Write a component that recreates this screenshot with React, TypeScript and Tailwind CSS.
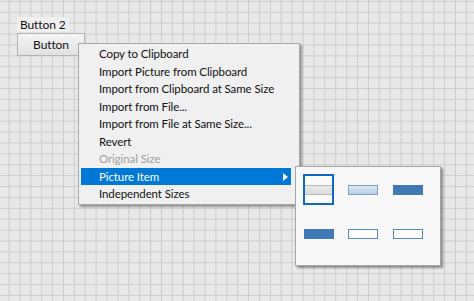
const items: { label: string; disabled?: boolean; active?: boolean; sub?: boolean }[] = [
  { label: 'Copy to Clipboard' },
  { label: 'Import Picture from Clipboard' },
  { label: 'Import from Clipboard at Same Size' },
  { label: 'Import from File...' },
  { label: 'Import from File at Same Size...' },
  { label: 'Revert' },
  { label: 'Original Size', disabled: true },
  { label: 'Picture Item', active: true, sub: true },
  { label: 'Independent Sizes' }
]

function Swatch({ kind }: { kind: string }) {
  if (kind === 'light') {
    return <div className="w-[30px] h-[10px] border border-[#7f9fc0] bg-[linear-gradient(to_bottom,#dbe8f5,#b9d0e8)]" />
  }
  if (kind === 'solid') {
    return <div className="w-[30px] h-[10px] bg-[#3f7ab4]" />
  }
  return <div className="w-[30px] h-[10px] border border-[#5d88b5] bg-white" />
}

export default function App() {
  return (
    <div className="relative w-[474px] h-[301px] overflow-hidden bg-[#e8e8e8] bg-[linear-gradient(to_right,#cdcdcd_1px,transparent_1px),linear-gradient(to_bottom,#cdcdcd_1px,transparent_1px)] bg-[size:10.9px_10.9px] bg-[position:8.5px_0.9px] font-['Lato',sans-serif] text-[11.5px] tracking-[-0.1px] text-[#111] whitespace-nowrap">
      {/* front panel controls */}
      <div className="absolute left-[17px] top-[17px] h-[15px] px-[3px] bg-[#efefef] leading-[15px] text-[12px]">Button 2</div>
      <div className="absolute left-[17px] top-[33px] w-[68px] h-[23px] border border-[#b4b4b4] bg-[linear-gradient(to_bottom,#f4f4f4,#e2e2e2)] flex items-center justify-center text-[12px]">
        Button
      </div>

      {/* context menu */}
      <div className="absolute left-[78px] top-[43px] w-[222px] border border-[#a7a7a7] bg-[#f0f0f0] py-[1px] px-[2px] shadow-[2px_2px_2px_rgba(0,0,0,0.35)]">
        {items.map((it) => (
          <div
            key={it.label}
            className={`relative h-[17.5px] leading-[17.5px] pl-[18px] pr-[10px] mr-[6px] ${
              it.active ? 'bg-[#0078d7] text-white' : it.disabled ? 'text-[#a0a0a0]' : ''
            }`}
          >
            {it.label}
            {it.sub && (
              <svg className="absolute right-[2px] top-[5px]" width="6" height="8" viewBox="0 0 6 8">
                <path d="M0 0 L5 4 L0 8 Z" fill="white" />
              </svg>
            )}
          </div>
        ))}
      </div>

      {/* picture item submenu */}
      <div className="absolute left-[295px] top-[166px] w-[146px] h-[100px] border border-[#a7a7a7] bg-[#f8f8f8] shadow-[2px_2px_2px_rgba(0,0,0,0.4)] pl-[7px] pt-[7px] flex flex-col gap-[24px]">
        <div className="flex items-center h-[31px]">
          <div className="w-[31px] h-[31px] border-2 border-[#1167c8] flex flex-col">
            <div className="flex-1 bg-[#fafafa]" />
            <div className="h-[10px] border-y border-[#b9b9b9] bg-[linear-gradient(to_bottom,#e8e8e8,#dcdcdc)]" />
            <div className="flex-1 bg-[#fafafa]" />
          </div>
          <div className="ml-[14px]"><Swatch kind="light" /></div>
          <div className="ml-[15px]"><Swatch kind="solid" /></div>
        </div>
        <div className="flex items-center">
          <div className="ml-[1px]"><Swatch kind="solid" /></div>
          <div className="ml-[14px]"><Swatch kind="outline" /></div>
          <div className="ml-[15px]"><Swatch kind="outline" /></div>
        </div>
      </div>
    </div>
  )
}
